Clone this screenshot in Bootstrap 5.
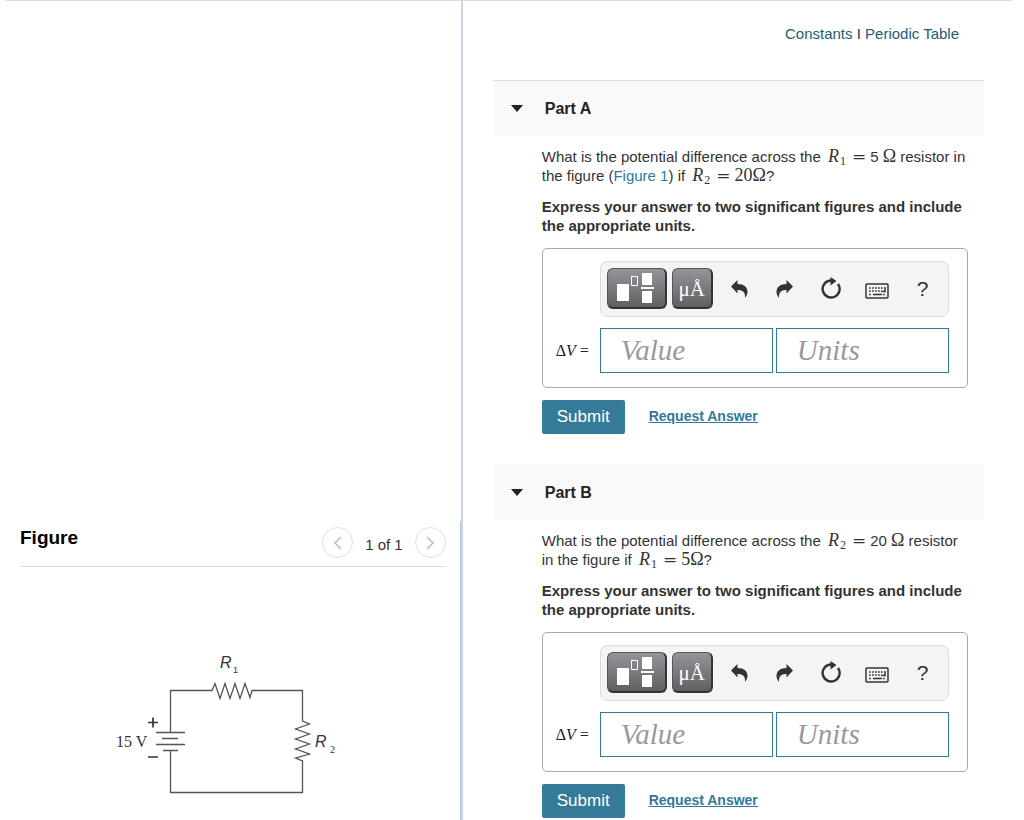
<!DOCTYPE html>
<html lang="en">
<head>
<meta charset="utf-8">
<meta name="viewport" content="width=device-width, initial-scale=1">
<title>Series circuit problem</title>
<link href="https://cdn.jsdelivr.net/npm/bootstrap@5.3.0/dist/css/bootstrap.min.css" rel="stylesheet">
<style>
body{font-family:"Liberation Sans",Arial,sans-serif;font-size:15px;line-height:19px;color:#333;background:#fff}
a{color:#31799b;text-decoration:none}
.page-shell{padding:0 12px 0 5px}
.workspace{display:grid;grid-template-columns:minmax(0,5fr) minmax(0,6fr);min-height:100vh;border-top:1px solid #ddd}
.side-pane{border-right:2px solid #ccd4e6}
.figure-pane{padding:6px 14px 0 15px;border-right:1px solid #b9c5dc;height:299px}
.figure-head{border-bottom:1px solid #ddd;padding-bottom:8px}
.figure-title{font-size:19px;line-height:22px;font-weight:700;color:#000}
.pager-btn{width:31px;height:31px;border:1px solid #e2e2e2;border-radius:50%;background:#fff;padding:0}
.circuit{display:block;width:270px;height:170px;margin:73px 0 0 70px}
.problem-pane{padding:0 28px 2px 31px}
.top-links{padding:23px 25px 37px 0}
.top-links a{color:#255c74}
.part-head{background:#f9f9f9;height:55px;padding-left:16px;gap:21px}
.part-first{border-top:1px solid #ddd;height:56px}
.part-title{font-size:16px;line-height:20px;font-weight:700;color:#222}
.toggle-btn{border:0;background:none;padding:0;width:14px;height:20px}
.part-body{padding:11px 16px 0 48px}
.part-body p{margin-bottom:12px}
.part-body .directions{margin-bottom:13px}
.part-body + .part-head{margin-top:31px}
.formula{font-family:"Liberation Serif","Times New Roman",serif;font-size:18px;line-height:16px;white-space:nowrap}
.formula i{margin:0 1px 0 3px}
.formula sub{font-size:12px;line-height:12px;bottom:-3px}
.formula .rel{font-family:"DejaVu Serif",serif;font-size:17px;margin:0 4px 0 6px}
.answer-box{border:1px solid #aaa;border-radius:5px;padding:12px 18px 14px 13px;display:grid;grid-template-columns:36px minmax(0,1fr);column-gap:8px;row-gap:11px;align-items:center}
.tool-strip{grid-column:2;height:56px;border:1px solid #ddd;border-radius:7px;background:#f4f4f4;padding:0 3px 2px 6px}
.tool-strip button{padding:0;border:0;background:none;color:#333}
.tool-strip .dark-key{height:41px;border:1px solid #555;border-right:2px solid #333;border-bottom:2px solid #333;border-radius:6px;background:linear-gradient(#95949c,#606060);color:#fff}
.key-template{width:60px}
.key-units{width:41px;margin-left:5px;font-family:"Liberation Serif",serif;font-size:21px}
.tool-strip .key-units{padding-top:4px}
.plain-key{width:45px;height:41px}
.help-key{font-size:21px}
.delta-label{font-family:"Liberation Serif",serif;font-size:16px;white-space:nowrap;color:#222}
.entry-row{gap:3px}
.entry{min-width:0;width:50%;height:45px;border:1px solid #31799b;border-radius:0;padding:0 20px;font:italic 29px/40px "Liberation Serif",serif;background:#fff;color:#333}
.entry::placeholder{color:#999;opacity:1}
.submit-btn{background:#357a99;color:#fff;border-radius:2px;font-size:17px;line-height:20px;padding:7px 15px;border:0}
.request-link{text-decoration:underline;font-size:14px;font-weight:700;padding-bottom:2px}
.actions{padding-top:12px;gap:24px}
</style>
</head>
<body>
<svg class="d-none" xmlns="http://www.w3.org/2000/svg">
<symbol id="i-template" viewBox="0 0 56 38"><path d="M9 15h12v17H9zM34 4h10v12H34zM34 22h10v12H34zM33 18h13v2H33z" fill="#fff"/><path d="M23.500 7.500h6v9h-6z" fill="none" stroke="#fff"/></symbol>
<symbol id="i-undo" viewBox="0 0 18 18"><path d="M1 6.500 7.500 0V4C14 4 17.500 7 17.500 12c0 2-1 4-2.500 6C15.500 12.500 13 10 7.500 10v3.500z" fill="#333"/></symbol>
<symbol id="i-reset" viewBox="0 0 22 22"><path d="M18 7A8.500 8.500 0 1 1 11 3.500" fill="none" stroke="#333" stroke-width="2.400"/><path d="M10.500 0l6 4-6 4.500z" fill="#333"/></symbol>
<symbol id="i-keys" viewBox="0 0 24 16"><rect x="1" y="1" width="22" height="14" rx="1" fill="none" stroke="#333" stroke-width="1.500"/><path d="M4 5h14M4 8h13M4 11.500h2M18 11.500h2" stroke="#333" stroke-width="1.700" stroke-dasharray="1.700 1.300"/><path d="M8 11.500h9M20 4v4.500h-3" fill="none" stroke="#333" stroke-width="1.500"/></symbol>
</svg>
<div class="page-shell">
<div class="workspace">
<aside class="side-pane d-flex flex-column justify-content-end">
<section class="figure-pane">
<div class="figure-head d-flex justify-content-between">
<h2 class="figure-title m-0">Figure</h2>
<div class="d-flex align-items-center">
<button class="pager-btn" type="button" aria-label="Previous figure"><svg class="d-block mx-auto" width="10" height="14" viewBox="0 0 10 14"><path d="M8 1 2 7l6 6" fill="none" stroke="#bbb" stroke-width="1.500"/></svg></button>
<span class="px-2 mx-1 pt-1">1 of 1</span>
<button class="pager-btn" type="button" aria-label="Next figure"><svg class="d-block mx-auto" width="10" height="14" viewBox="0 0 10 14"><path d="m2 1 6 6-6 6" fill="none" stroke="#bbb" stroke-width="1.500"/></svg></button>
</div>
</div>
<svg class="circuit" viewBox="0 0 270 170" role="img" aria-label="Circuit with a 15 volt battery and two resistors in series">
<g fill="none" stroke="#555" stroke-width="1.300">
<path d="M80.500 92V50.500H122l3-7 5 15 5-15 5 15 5-15 5 15 5-15 5 14 2-7h50.500V81l7 3-14 5 14 5-14 5 14 5-14 5 14 5-14 4 7 3v31.500H80.500V110M66 92.500h29M72 98.500h16M66 104.500h29M73 110.500h15"/>
<path d="M58 82.500h10M63 77.500v10M58 117h10" stroke="#333" stroke-width="1.700"/>
</g>
<g fill="#333" font-family="Liberation Sans,sans-serif">
<text x="130" y="28" font-size="16" font-style="italic">R</text><text x="143" y="33" font-size="9">1</text>
<text x="225" y="107" font-size="16" font-style="italic">R</text><text x="240" y="113" font-size="10" font-family="Liberation Serif,serif">2</text>
<text x="26" y="107" font-size="16" font-family="Liberation Serif,serif">15 V</text>
</g>
</svg>
</section>
</aside>
<main class="problem-pane">
<nav class="top-links text-end"><a href="#">Constants</a> I <a href="#">Periodic Table</a></nav>

<div class="part-head part-first d-flex align-items-center">
<button class="toggle-btn" type="button" aria-label="Collapse Part A"><svg class="d-block" width="14" height="8" viewBox="0 0 14 8"><path d="M1 0h12L7 7z" fill="#222"/></svg></button>
<h2 class="part-title m-0">Part A</h2>
</div>
<div class="part-body">
<p>What is the potential difference across the <span class="formula"><i>R</i><sub>1</sub><span class="rel">=</span></span>5 <span class="formula">Ω</span> resistor in the figure (<a href="#">Figure 1</a>) if <span class="formula"><i>R</i><sub>2</sub><span class="rel">=</span>20Ω</span>?</p>
<p class="directions fw-bold">Express your answer to two significant figures and include the appropriate units.</p>
<form>
<div class="answer-box">
<div class="tool-strip d-flex align-items-center">
<button class="dark-key key-template" type="button" aria-label="Templates"><svg class="d-block" width="56" height="38"><use href="#i-template"/></svg></button>
<button class="dark-key key-units" type="button">μÅ</button>
<div class="d-flex flex-fill justify-content-between ps-1">
<button class="plain-key" type="button" aria-label="Undo"><svg width="18" height="18"><use href="#i-undo"/></svg></button>
<button class="plain-key" type="button" aria-label="Redo"><svg width="18" height="18"><use href="#i-undo" transform="translate(18 0) scale(-1 1)"/></svg></button>
<button class="plain-key" type="button" aria-label="Reset"><svg width="22" height="22"><use href="#i-reset"/></svg></button>
<button class="plain-key" type="button" aria-label="Keyboard shortcuts"><svg class="mt-1" width="24" height="16"><use href="#i-keys"/></svg></button>
<button class="plain-key help-key" type="button">?</button>
</div>
</div>
<label class="delta-label" for="value-a">Δ<i>V</i> =</label>
<div class="entry-row d-flex">
<input class="entry" id="value-a" type="text" placeholder="Value">
<input class="entry" type="text" placeholder="Units" aria-label="Units">
</div>
</div>
<div class="actions d-flex align-items-center">
<button class="submit-btn" type="submit">Submit</button>
<a class="request-link" href="#">Request Answer</a>
</div>
</form>
</div>

<div class="part-head d-flex align-items-center">
<button class="toggle-btn" type="button" aria-label="Collapse Part B"><svg class="d-block" width="14" height="8" viewBox="0 0 14 8"><path d="M1 0h12L7 7z" fill="#222"/></svg></button>
<h2 class="part-title m-0">Part B</h2>
</div>
<div class="part-body">
<p>What is the potential difference across the <span class="formula"><i>R</i><sub>2</sub><span class="rel">=</span></span>20 <span class="formula">Ω</span> resistor in the figure if <span class="formula"><i>R</i><sub>1</sub><span class="rel">=</span>5Ω</span>?</p>
<p class="directions fw-bold">Express your answer to two significant figures and include the appropriate units.</p>
<form>
<div class="answer-box">
<div class="tool-strip d-flex align-items-center">
<button class="dark-key key-template" type="button" aria-label="Templates"><svg class="d-block" width="56" height="38"><use href="#i-template"/></svg></button>
<button class="dark-key key-units" type="button">μÅ</button>
<div class="d-flex flex-fill justify-content-between ps-1">
<button class="plain-key" type="button" aria-label="Undo"><svg width="18" height="18"><use href="#i-undo"/></svg></button>
<button class="plain-key" type="button" aria-label="Redo"><svg width="18" height="18"><use href="#i-undo" transform="translate(18 0) scale(-1 1)"/></svg></button>
<button class="plain-key" type="button" aria-label="Reset"><svg width="22" height="22"><use href="#i-reset"/></svg></button>
<button class="plain-key" type="button" aria-label="Keyboard shortcuts"><svg class="mt-1" width="24" height="16"><use href="#i-keys"/></svg></button>
<button class="plain-key help-key" type="button">?</button>
</div>
</div>
<label class="delta-label" for="value-b">Δ<i>V</i> =</label>
<div class="entry-row d-flex">
<input class="entry" id="value-b" type="text" placeholder="Value">
<input class="entry" type="text" placeholder="Units" aria-label="Units">
</div>
</div>
<div class="actions d-flex align-items-center">
<button class="submit-btn" type="submit">Submit</button>
<a class="request-link" href="#">Request Answer</a>
</div>
</form>
</div>
</main>
</div>
</div>
<script src="https://cdn.jsdelivr.net/npm/bootstrap@5.3.0/dist/js/bootstrap.bundle.min.js"></script>
</body>
</html>
